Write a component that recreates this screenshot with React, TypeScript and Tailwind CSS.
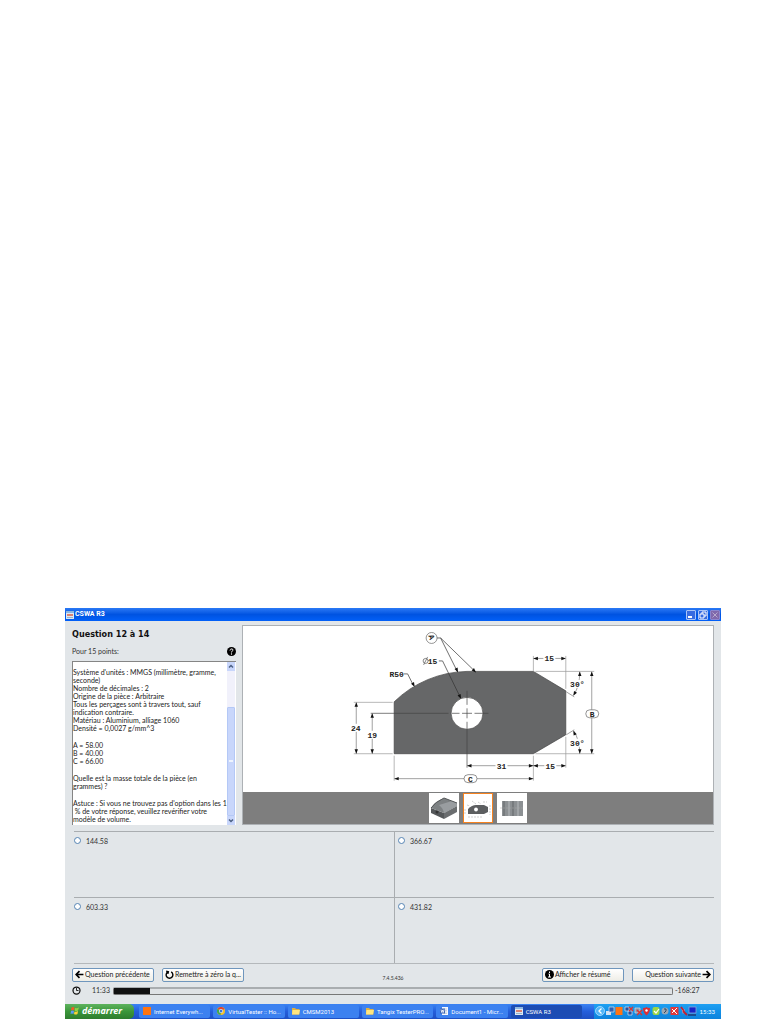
import { useState, type ReactNode } from "react";

const STATEMENT: string[][] = [
  [
    "Système d'unités : MMGS (millimètre, gramme,",
    "seconde)",
    "Nombre de décimales : 2",
    "Origine de la pièce : Arbitraire",
    "Tous les perçages sont à travers tout, sauf",
    "indication contraire.",
    "Matériau : Aluminium, alliage 1060",
    "Densité = 0,0027 g/mm^3",
  ],
  ["A = 58.00", "B = 40.00", "C = 66.00"],
  ["Quelle est la masse totale de la pièce (en", "grammes) ?"],
  [
    "Astuce : Si vous ne trouvez pas d'option dans les 1",
    "\u00a0% de votre réponse, veuillez revérifier votre",
    "modèle de volume.",
  ],
];

const ANSWERS = ["144.58", "366.67", "603.33", "431.82"];

const TASKS = [
  { label: "Internet Everywh...", icon: "orange" },
  { label: "VirtualTester :: Ho...", icon: "chrome" },
  { label: "CMSM2013", icon: "folder" },
  { label: "Tangix TesterPRO...", icon: "folder" },
  { label: "Document1 - Micr...", icon: "word" },
  { label: "CSWA R3", icon: "app", active: true },
];

function TaskIcon({ name }: { name: string }) {
  return (
    <svg viewBox="0 0 16 16" className="size-2 shrink-0" aria-hidden="true">
      {name === "orange" && <rect width="16" height="16" fill="#ff7412" />}
      {name === "chrome" && (
        <>
          <circle cx="8" cy="8" r="8" fill="#f2c22c" />
          <path d="M8 8 1 4a8 8 0 0 1 14 0Z" fill="#dd4436" />
          <path d="M8 8 1 4a8 8 0 0 0 6 12Z" fill="#3fa650" />
          <circle cx="8" cy="8" r="4" fill="#fff" />
          <circle cx="8" cy="8" r="3" fill="#3c78d8" />
        </>
      )}
      {name === "folder" && (
        <>
          <path d="M0 2h6l2 2h7v11H0Z" fill="#e0b040" />
          <path d="M1 6h15l-2 9H0Z" fill="#ffe680" />
        </>
      )}
      {name === "word" && (
        <>
          <rect x="4" width="12" height="16" fill="#f5f8ff" />
          <path d="M7 4h7M7 7h7M7 10h7M7 13h7" stroke="#9ab" />
          <rect y="3" width="10" height="10" fill="#3d66b5" />
          <path d="m2 5 1.500 6L5 6l1.500 5L8 5" stroke="#fff" fill="none" strokeWidth="1.500" />
        </>
      )}
      {name === "app" && (
        <>
          <rect width="16" height="16" rx="1" fill="#dce8f4" />
          <rect width="16" height="4" fill="#8db6e0" />
          <path d="M2 8h12" stroke="#d8604a" strokeWidth="3" />
          <path d="M2 13h12" stroke="#9ab4c8" strokeWidth="2" />
        </>
      )}
    </svg>
  );
}

function Arrow({ x, y, angle }: { x: number; y: number; angle: number }) {
  return <path d="M0 0-4.500 1.700V-1.700Z" fill="#111" stroke="none" transform={`translate(${x} ${y}) rotate(${angle})`} />;
}

function Dim({ x, y, w = 10, children }: { x: number; y: number; w?: number; children: ReactNode }) {
  return (
    <g stroke="none">
      <rect x={x - w / 2 - 1} y={y - 4} width={w + 2} height="8" fill="#fff" />
      <text x={x} y={y + 3} textAnchor="middle" fill="#222">
        {children}
      </text>
    </g>
  );
}

function PartDrawing() {
  return (
    <svg
      viewBox="243 626 471 166"
      className="block w-full bg-white font-['Liberation_Mono',monospace] text-[8px] font-bold"
      fill="none"
      stroke="#999"
      strokeWidth="0.7"
      role="img"
      aria-label="Plan coté de la pièce"
    >
      <path
        d="M394.500 754V702A107 107 0 0 1 467.500 671.500H534L566.500 691V735L534 754Z"
        fill="#666768"
        stroke="#444"
      />
      <circle cx="467.5" cy="713.5" r="16" fill="#fff" stroke="#444" />

      {/* axes and extension lines */}
      <path
        d="M462.500 713.500h10M467.500 708.500v10M452 713.500h8M475 713.500h14M467.500 691v14M467.500 722v46M371 713.500h78"
        stroke="#444"
      />
      <path d="M354 702.500h39M354 754h39M394.500 756v25M534 756v25M566.500 737v31M534 656v15M566.500 656v33M536 671.500h59M536 754h59" />
      <path d="M567 692l8 5M567 735l8-5" stroke="#777" />

      {/* dimension lines */}
      <path
        d="M356.500 703v51M372.500 714v40M468 766h98M395 779h139M534 658.500h32M592.500 672v82M580.500 672q0 14-6 23M580.500 754q0-13-6-23"
        stroke="#777"
      />
      <Arrow x={356.5} y={702.5} angle={-90} />
      <Arrow x={356.5} y={754} angle={90} />
      <Arrow x={372.5} y={713.5} angle={-90} />
      <Arrow x={372.5} y={754} angle={90} />
      <Arrow x={467.5} y={766} angle={180} />
      <Arrow x={534} y={766} angle={0} />
      <Arrow x={534} y={766} angle={180} />
      <Arrow x={566.5} y={766} angle={0} />
      <Arrow x={394.5} y={779} angle={180} />
      <Arrow x={534} y={779} angle={0} />
      <Arrow x={534} y={658.5} angle={180} />
      <Arrow x={566.5} y={658.5} angle={0} />
      <Arrow x={592.5} y={671.5} angle={-90} />
      <Arrow x={592.5} y={754} angle={90} />
      <Arrow x={580.5} y={671.5} angle={-90} />
      <Arrow x={574} y={696} angle={120} />
      <Arrow x={580.5} y={754} angle={90} />
      <Arrow x={574} y={731} angle={-115} />

      {/* leaders */}
      <path d="M437 638h4l17 34M441 638l35 34M439 661h4l18 37M404 674h4l6 12" stroke="#333" />
      <Arrow x={458.5} y={672.5} angle={64} />
      <Arrow x={476.5} y={672.5} angle={45} />
      <Arrow x={461.5} y={699} angle={64} />
      <Arrow x={415} y={687} angle={62} />

      <Dim x={356} y={728}>24</Dim>
      <Dim x={372.5} y={735}>19</Dim>
      <Dim x={502} y={766}>31</Dim>
      <Dim x={551} y={766}>15</Dim>
      <Dim x={550} y={658.5}>15</Dim>
      <Dim x={578} y={684} w={11}>30°</Dim>
      <Dim x={578} y={743} w={11}>30°</Dim>
      <Dim x={397} y={674} w={12}>R50</Dim>
      <Dim x={433} y={661}>15</Dim>
      <circle cx="426" cy="661" r="2.5" stroke="#555" />
      <path d="m424 665 4-8" stroke="#555" />

      <circle cx="432" cy="638" r="5.5" fill="#fff" stroke="#666" />
      <text transform="translate(429.5 638) rotate(70)" textAnchor="middle" fill="#222" stroke="none">
        A
      </text>
      <rect x="464.500" y="775" width="13" height="8" rx="4" fill="#fff" stroke="#666" />
      <text x="471" y="782" textAnchor="middle" fill="#222" stroke="none">
        C
      </text>
      <rect x="586.500" y="710" width="13" height="8" rx="4" fill="#fff" stroke="#666" />
      <text x="593" y="717" textAnchor="middle" fill="#222" stroke="none">
        B
      </text>
    </svg>
  );
}

function IsoThumb() {
  return (
    <svg viewBox="0 0 28 28" className="size-full">
      <path d="M1 14 14 19v6L1 19Z" fill="#55585a" />
      <path d="M14 19 27 12v6L14 25Z" fill="#6a6d6f" />
      <path d="M1 14Q4 8 14 4l13 5v3l-13 7Z" fill="#7d8183" />
      <path d="m9 11 13-4 5 2v3l-13 7Q13 14 9 11Z" fill="#999da0" />
      <path d="M1 14Q5 8 14 4l13 5" fill="none" stroke="#55585a" strokeWidth="1" />
      <circle cx="7" cy="18" r="1.500" fill="#333" />
    </svg>
  );
}

function FrontThumb() {
  return (
    <svg viewBox="0 0 28 28" className="size-full">
      <path d="M4 20v-5q4-4 8-4h8l4 2v5l-4 2Z" fill="#5c5e60" />
      <circle cx="12" cy="15.500" r="1.900" fill="#fff" />
      <path
        d="M1 15v6M4 23h15M19 8h4M26 11v10M8 7l4 3M3 11l3 1M14 8l3 2"
        stroke="#bbb"
        strokeWidth="0.7"
        strokeDasharray="2 1"
      />
    </svg>
  );
}

function SideThumb() {
  return (
    <svg viewBox="0 0 28 28" className="size-full">
      <rect x="4" y="7" width="21" height="15" fill="#8c9093" />
      <path d="M6 7v15M15 7v15" stroke="#777b7e" strokeWidth="2" />
      <path d="M11 7v15M20 7v15" stroke="#a1a5a8" strokeWidth="2" />
      <path d="M2 14h24" stroke="#aaa" strokeWidth="0.5" strokeDasharray="2 1" />
    </svg>
  );
}

const THUMBS = [
  { label: "Vue isométrique", view: <IsoThumb /> },
  { label: "Vue de face", view: <FrontThumb /> },
  { label: "Vue de côté", view: <SideThumb /> },
];

function NavButton({ children, className = "" }: { children: ReactNode; className?: string }) {
  return (
    <button
      className={`flex h-[14px] w-[82px] items-center gap-px rounded-[2px] border border-[#6f96bd] bg-linear-to-b from-white to-[#eeede6] px-[2px] text-[7px] whitespace-nowrap text-[#222] ${className}`}
    >
      {children}
    </button>
  );
}

function ArrowIcon({ className = "" }: { className?: string }) {
  return (
    <svg viewBox="0 0 16 16" className={`size-[9px] shrink-0 ${className}`} fill="none" stroke="#000" strokeWidth="3">
      <path d="M15 8H2M8 2 2 8l6 6" />
    </svg>
  );
}

function TitleBar() {
  return (
    <header className="flex h-[13px] items-center bg-linear-to-b from-[#2a79f5] via-[#0053e1] to-[#0260f8] pr-px pl-px">
      <TaskIcon name="app" />
      <h1 className="ml-px flex-1 font-['Roboto',sans-serif] text-[7px] font-bold text-white">CSWA R3</h1>
      <div className="flex gap-[2px]">
        <button aria-label="Réduire" className="size-[10px] rounded-[1px] border border-[#a9c4f8] bg-[#386be0]">
          <svg viewBox="0 0 8 8" className="size-full">
            <path d="M1 6h4" stroke="#fff" strokeWidth="2" />
          </svg>
        </button>
        <button aria-label="Restaurer" className="size-[10px] rounded-[1px] border border-[#a9c4f8] bg-[#386be0]">
          <svg viewBox="0 0 8 8" className="size-full" fill="none" stroke="#fff">
            <path d="M3 3V1h4v4H5M1 3h4v4H1Z" />
          </svg>
        </button>
        <button aria-label="Fermer" disabled className="size-[10px] rounded-[1px] border border-[#8b86cf] bg-[#8068ac]">
          <svg viewBox="0 0 8 8" className="size-full" stroke="#b7a9cd">
            <path d="m1.500 1.500 5 5M6.500 1.500l-5 5" />
          </svg>
        </button>
      </div>
    </header>
  );
}

function QuestionPanel() {
  return (
    <section className="flex w-[164px] shrink-0 flex-col">
      <h2 className="mt-[3px] font-['DejaVu_Sans_Condensed','DejaVu_Sans',sans-serif] text-[9px] leading-[12px] font-bold text-[#111]">
        Question 12 à 14
      </h2>
      <div className="mt-[5px] flex h-[12px] items-center justify-between text-[7px]">
        <span>Pour 15 points:</span>
        <button aria-label="Aide" className="size-[9px]">
          <svg viewBox="0 0 18 18" className="size-full">
            <circle cx="9" cy="9" r="9" fill="#000" />
            <path d="M6 7c0-4 6-4 6-1 0 2-3 2-3 5" fill="none" stroke="#fff" strokeWidth="2" />
            <circle cx="9" cy="14" r="1.300" fill="#fff" />
          </svg>
        </button>
      </div>
      <div className="mt-[4px] flex flex-1 border-t border-l border-[#858585] bg-white">
        <div className="flex min-w-0 flex-1 flex-col gap-[9px] pt-[6px] text-[7px] leading-[8px] whitespace-nowrap text-[#222]">
          {STATEMENT.map((lines) => (
            <p key={lines[0]}>
              {lines.map((line) => (
                <span key={line} className="block">
                  {line}
                </span>
              ))}
            </p>
          ))}
        </div>
        <div className="mr-px flex w-[8px] shrink-0 flex-col bg-[#f1f1fb]">
          <button aria-label="Défiler vers le haut" className="h-[9px] bg-[#c8d6fb]">
            <svg viewBox="0 0 8 8" className="size-full" fill="none" stroke="#4d6185" strokeWidth="1.500">
              <path d="m2 5 2-2 2 2" />
            </svg>
          </button>
          <div className="flex flex-1 flex-col pt-[36px]">
            <div className="flex flex-1 items-center justify-center rounded-[1px] border border-[#b4c8f6] bg-[#c8d6fb]">
              <span className="h-[2px] w-[4px] bg-[#eef4fe]" />
            </div>
          </div>
          <button aria-label="Défiler vers le bas" className="h-[9px] bg-[#c8d6fb]">
            <svg viewBox="0 0 8 8" className="size-full" fill="none" stroke="#4d6185" strokeWidth="1.500">
              <path d="m2 3 2 2 2-2" />
            </svg>
          </button>
        </div>
      </div>
    </section>
  );
}

function Tray() {
  return (
    <div className="flex h-full w-[127px] shrink-0 items-center justify-between bg-linear-to-b from-[#1fa0f2] via-[#1290e8] to-[#0f83dc] pr-[6px] pl-px text-[6px] text-white">
      <svg viewBox="0 0 102 12" className="h-[12px] w-[102px] shrink-0" aria-hidden="true">
        <circle cx="5" cy="6" r="4.500" fill="#4fb4f7" stroke="#c7e8ff" strokeWidth="0.700" />
        <path d="M6.500 3.500 4 6l2.500 2.500" fill="none" stroke="#fff" strokeWidth="1.300" />
        <path d="M11 6h5v4h-5Z" fill="#d5e3f2" />
        <path d="M14 2h5v5h-5Z" fill="#2c5fb4" stroke="#d5e3f2" strokeWidth="0.700" />
        <rect x="20.500" y="2" width="7" height="8" fill="#ff7412" />
        <path d="M30 2h4v4h-4ZM33 6h4v4h-4Z" fill="#27509c" stroke="#d5e3f2" strokeWidth="0.700" />
        <path d="m34 2 4 4m0-4-4 4" stroke="#e0332c" strokeWidth="1.200" />
        <path d="M40 3h5v5h-5Z" fill="#8495ad" stroke="#ddd" strokeWidth="0.700" />
        <path d="m42 5 5 5m0-5-5 5" stroke="#e0332c" strokeWidth="1.400" />
        <path d="M48 3q3 0 3.500-1Q52 3 55 3q0 5-3.500 7.500Q48 8 48 3Z" fill="#dd2f34" />
        <circle cx="51.500" cy="5.500" r="1.200" fill="#fff" />
        <rect x="57.500" y="2" width="7" height="8" rx="2" fill="#9bd646" />
        <path d="m59 6 2 2 3-4" fill="none" stroke="#fff" strokeWidth="1.200" />
        <circle cx="70" cy="6" r="3.500" fill="#9aa7b5" />
        <path d="M69 4h2v2l-2 2" fill="none" stroke="#35485e" />
        <rect x="75.500" y="2" width="8" height="8" fill="#e2383b" />
        <path d="m77 8 5-5M77 4l5 5" stroke="#fff" />
        <path d="m86 2 4 3-2 4Z" fill="#e9b2bb" />
        <path d="m86 2 3 4M88 6l4 4" stroke="#c32031" strokeWidth="1.800" />
        <rect x="94" y="2" width="7" height="6" fill="#1725c8" stroke="#8aa4d8" strokeWidth="0.800" />
        <path d="M93 10h8" stroke="#203a72" strokeWidth="1.500" />
      </svg>
      <time>15:33</time>
    </div>
  );
}

function Taskbar() {
  return (
    <footer className="flex h-[15px] items-center bg-linear-to-b from-[#3b83f3] via-[#245edb] to-[#1e50c4] text-white">
      <button className="mr-[5px] flex h-full w-[69px] shrink-0 items-center gap-[2px] rounded-r-[5px] bg-linear-to-b from-[#5eb35e] via-[#3a963a] to-[#2e7d2e] pl-[5px] font-['Noto_Sans',sans-serif] text-[9px] font-bold italic">
        <svg viewBox="0 0 20 20" className="size-[10px] shrink-0" aria-hidden="true">
          <path d="M3 3q3-2 6 0l-1 6q-3-2-6 0Z" fill="#f05a28" />
          <path d="M10 4q4 1 8-1l-2 6q-3 2-7 0Z" fill="#8fd148" />
          <path d="M2 10q3-2 6 0l-1 6q-3-2-6 0Z" fill="#5b9cf5" />
          <path d="M9 11q4 1 7-1l-1 6q-4 2-7 0Z" fill="#fbd338" />
        </svg>
        démarrer
      </button>
      <nav className="grid min-w-0 flex-1 grid-cols-6 gap-[3px] pr-[12px]">
        {TASKS.map((task) => (
          <button
            key={task.label}
            className={`flex h-[13px] min-w-0 items-center gap-[3px] overflow-hidden rounded-[2px] pl-[4px] font-['Roboto',sans-serif] text-[6px] whitespace-nowrap ${
              task.active ? "bg-[#1c4cb4]" : "bg-[#3c81f0]"
            }`}
          >
            <TaskIcon name={task.icon} />
            {task.label}
          </button>
        ))}
      </nav>
      <Tray />
    </footer>
  );
}

export default function App() {
  const [answer, setAnswer] = useState("");
  const [view, setView] = useState(1);

  return (
    <div className="min-h-screen bg-white pt-[608px] pr-[47px] pb-[5px] pl-[65px] font-['Lato','DejaVu_Sans',sans-serif] text-[#333]">
      <div className="bg-[#e2e6e9]">
        <TitleBar />

        <main className="px-[7px] pt-[4px]">
          <div className="flex gap-[6px]">
            <QuestionPanel />
            <section className="min-w-0 flex-1 border border-[#adb1b5]">
              <PartDrawing />
              <div className="flex h-[32px] items-center justify-center gap-[4px] bg-[#7e7e7e]">
                {THUMBS.map((thumb, i) => (
                  <button
                    key={thumb.label}
                    aria-label={thumb.label}
                    onClick={() => setView(i)}
                    className={`size-[30px] border bg-white ${i === view ? "border-[#f58220]" : "border-white"}`}
                  >
                    {thumb.view}
                  </button>
                ))}
              </div>
            </section>
          </div>

          <div
            role="radiogroup"
            aria-label="Réponses"
            className="mt-[6px] ml-[2px] grid grid-cols-2 border-b border-[#b4b8bb]"
          >
            {ANSWERS.map((value) => (
              <label
                key={value}
                className="flex h-[66px] items-start gap-[5px] border-t border-[#a9adb0] pt-[5px] text-[7px] leading-[8px] even:border-l even:pl-[3px]"
              >
                <input
                  type="radio"
                  name="answer"
                  value={value}
                  checked={answer === value}
                  onChange={() => setAnswer(value)}
                  className="size-[7px] appearance-none rounded-full border border-[#5484b4] bg-white checked:bg-[#35a035]"
                />
                {value}
              </label>
            ))}
          </div>

          <div className="mt-[4px] flex items-start">
            <NavButton>
              <ArrowIcon />
              Question précédente
            </NavButton>
            <NavButton className="ml-[8px]">
              <svg viewBox="0 0 16 16" className="size-[9px] shrink-0" fill="none" stroke="#000" strokeWidth="2.500">
                <path d="M5 3.500a6 6 0 1 0 6 0M2 2l4 1-1 4" />
              </svg>
              Remettre à zéro la q...
            </NavButton>
            <span className="flex-1 pt-[6px] text-center text-[5px] leading-[8px]">7.4.5.436</span>
            <NavButton>
              <svg viewBox="0 0 18 18" className="size-[9px] shrink-0">
                <circle cx="9" cy="9" r="9" fill="#000" />
                <path d="M7 8h2v6M6 14h6M9 3v3" fill="none" stroke="#fff" strokeWidth="2" />
              </svg>
              Afficher le résumé
            </NavButton>
            <NavButton className="ml-[8px] justify-end">
              Question suivante
              <ArrowIcon className="rotate-180" />
            </NavButton>
          </div>

          <div className="mt-[4px] flex h-[10px] items-center text-[7px]">
            <svg viewBox="0 0 18 18" className="size-[9px] shrink-0" fill="none" stroke="#111" strokeWidth="2.500">
              <circle cx="9" cy="9" r="7" />
              <path d="M9 4v5h4" strokeWidth="1.800" />
            </svg>
            <span className="w-[32px] shrink-0 pr-[3px] text-right">11:33</span>
            <div
              role="progressbar"
              aria-label="Temps écoulé"
              aria-valuenow={6}
              className="h-[8px] min-w-0 flex-1 rounded-[2px] border border-t-2 border-[#777] border-t-[#a9adb0] bg-[#dfe2e5]"
            >
              <div className="-mt-px h-[6px] bg-[#111]" style={{ width: "6.5%" }} />
            </div>
            <span className="w-[41px] shrink-0 pl-[2px]">-168:27</span>
          </div>
        </main>

        <div className="h-[8px]" />
        <Taskbar />
      </div>
    </div>
  );
}
